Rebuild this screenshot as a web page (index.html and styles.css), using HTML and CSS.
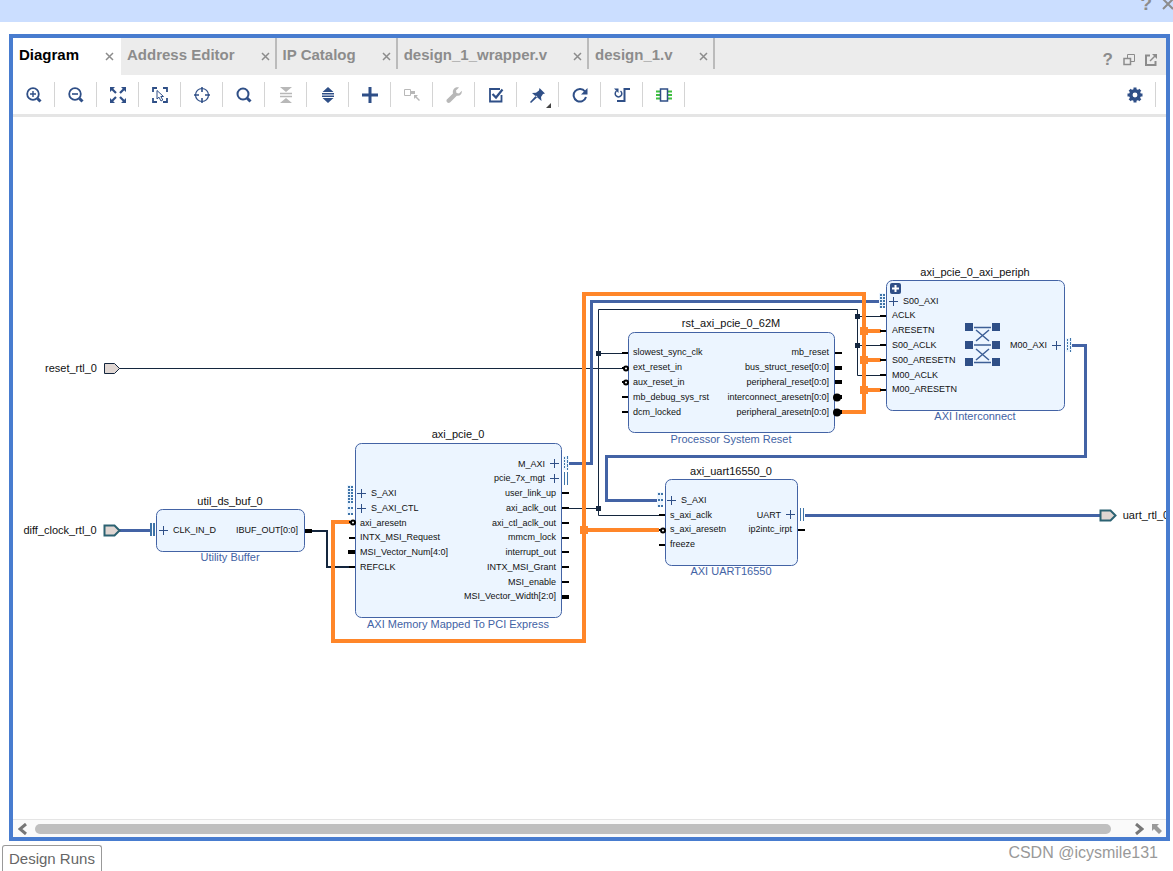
FILE: index.html
```
<!DOCTYPE html>
<html lang="en">
<head>
    <meta charset="UTF-8">
    <title>Diagram</title>
    <link rel="stylesheet" href="styles.css">
</head>
<body>

    <header class="topbar">
        <button class="top-btn">?</button>
        <button class="top-btn" aria-label="Close">
            <svg width="12" height="12"><path d="M1 1l10 10M11 1l-10 10" class="gray-line"/></svg>
        </button>
    </header>

    <main class="panel">
        <!-- tabs -->
        <div class="tabs">
            <div class="tab current">
                <button class="tab-name">Diagram</button>
                <button class="tab-close" aria-label="Close Diagram"><svg width="9" height="9"><path d="M1 1l7 7M8 1l-7 7"/></svg></button>
            </div>
            <div class="tab">
                <button class="tab-name">Address Editor</button>
                <button class="tab-close" aria-label="Close Address Editor"><svg width="9" height="9"><path d="M1 1l7 7M8 1l-7 7"/></svg></button>
            </div>
            <div class="tab">
                <button class="tab-name">IP Catalog</button>
                <button class="tab-close" aria-label="Close IP Catalog"><svg width="9" height="9"><path d="M1 1l7 7M8 1l-7 7"/></svg></button>
            </div>
            <div class="tab">
                <button class="tab-name">design_1_wrapper.v</button>
                <button class="tab-close" aria-label="Close design_1_wrapper.v"><svg width="9" height="9"><path d="M1 1l7 7M8 1l-7 7"/></svg></button>
            </div>
            <div class="tab">
                <button class="tab-name">design_1.v</button>
                <button class="tab-close" aria-label="Close design_1.v"><svg width="9" height="9"><path d="M1 1l7 7M8 1l-7 7"/></svg></button>
            </div>
            <div class="win-btns">
                <button class="win-btn">?</button>
                <button class="win-btn" aria-label="Float">
                    <svg width="12" height="12" fill="none" stroke="#8c8c8c"><path d="M4.500 4V.5h7v7H8" /><path d="M1 4.500h6.500v6H1z" stroke-width="1.500"/></svg>
                </button>
                <button class="win-btn" aria-label="Maximize">
                    <svg width="12" height="12" fill="none" stroke="#8c8c8c"><path d="M5 1.500H1v9.500h9.500V7" stroke-width="2"/><path d="M5 7l5-5" stroke-width="1.500"/><path d="M7 0h5v5z" fill="#8c8c8c" stroke="none"/></svg>
                </button>
            </div>
        </div>

        <!-- toolbar -->
        <div class="toolbar">
            <button class="tool" aria-label="Zoom in">
                <svg width="16" height="16" class="ico"><circle cx="7" cy="7" r="5.800" stroke-width="1.800"/><path d="M4 7h6M7 4v6" stroke-width="1.400"/><path d="M11.500 11.500l3 3" stroke-width="3"/></svg>
            </button>
            <button class="tool" aria-label="Zoom out">
                <svg width="16" height="16" class="ico"><circle cx="7" cy="7" r="5.800" stroke-width="1.800"/><path d="M4 7h6" stroke-width="1.600"/><path d="M11.500 11.500l3 3" stroke-width="3"/></svg>
            </button>
            <button class="tool" aria-label="Zoom fit">
                <svg width="16" height="16" class="ico"><path d="M2 2l4 4M14 2l-4 4M2 14l4-4M14 14l-4-4" stroke-width="2.200"/><path d="M0 0h5L0 5zM16 0v5l-5-5zM0 16v-5l5 5zM16 16h-5l5-5z" class="solid"/></svg>
            </button>
            <button class="tool" aria-label="Zoom to selection">
                <svg width="16" height="16" class="ico"><path d="M1 5V1h4M11 1h4v4M15 11v4h-4M5 15H1v-4" stroke-width="1.800"/><path d="M5 3.500v8.500l2-1.800 2 3.800 1.800-1-2-3.500h2.700z" stroke-width="1"/></svg>
            </button>
            <button class="tool" aria-label="Locate">
                <svg width="16" height="16" class="ico"><circle cx="8" cy="8" r="6.500" stroke-width="1.200"/><path d="M8 0v5M8 11v5M0 8h5M11 8h5" stroke-width="1.600"/></svg>
            </button>
            <button class="tool" aria-label="Search">
                <svg width="16" height="16" class="ico"><circle cx="7" cy="7" r="5.500" stroke-width="2"/><path d="M11 11l3.500 3.500" stroke-width="3"/></svg>
            </button>
            <button class="tool" aria-label="Collapse" disabled>
                <svg width="16" height="16" class="ico off"><path d="M2 0h12L8 5zM2 16h12l-6-5z" class="solid"/><path d="M2 6.500h12M2 9.500h12" stroke-width="1.500"/></svg>
            </button>
            <button class="tool" aria-label="Expand">
                <svg width="16" height="16" class="ico"><path d="M2.500 5L8 0l5.500 5zM2.500 11L8 16l5.500-5z" class="solid"/><path d="M2 6.800h12M2 9.200h12" stroke-width="1.400"/></svg>
            </button>
            <button class="tool" aria-label="Add IP">
                <svg width="16" height="16" class="ico"><path d="M0 8h16M8 0v16" stroke-width="3"/></svg>
            </button>
            <button class="tool" aria-label="Make external" disabled>
                <svg width="16" height="16" class="ico off"><path d="M.5 2.500h6v6h-6z"/><path d="M7 4h4v3H7zM10 8h4l-1.500 1.500L16 13l-1 1-3.500-3.500L10 12z" class="solid"/></svg>
            </button>
            <button class="tool" aria-label="Customize" disabled>
                <svg width="16" height="16" class="ico off"><path d="M13 .5l-3 3 .5 2.500 2.500.5 2.800-2.800c.5 3-1.800 5.800-5 5L4 15.500c-2 1.500-4.500-1-3.200-3L7 6.500C6 2.500 9.500-.5 13 .5z" class="solid"/></svg>
            </button>
            <button class="tool" aria-label="Validate">
                <svg width="16" height="16" class="ico"><path d="M12 2H2v12.500h11.500V8" stroke-width="1.800"/><path d="M4.500 7l3.500 3.500 6.500-8" stroke-width="2.200"/></svg>
            </button>
            <button class="tool tool-menu" aria-label="Pin">
                <svg width="16" height="16" class="ico"><path d="M9.500 1L15 6.500l-2 .5-2 3 .5 4-3.500-3-1.500-1L2 6l4-.2 3-2.300zM6 8.500L0 15l1 1 6.500-6z" class="solid"/></svg>
            </button>
            <button class="tool" aria-label="Refresh">
                <svg width="16" height="16" class="ico"><path d="M13 4.500A6.300 6.300 0 1 0 14 10" stroke-width="2"/><path d="M15.500 1v6.500H9z" class="solid"/></svg>
            </button>
            <button class="tool" aria-label="Regenerate layout">
                <svg width="16" height="16" class="ico"><path d="M2.500 4A3.300 3.300 0 1 0 6.500 4" stroke-width="1.500"/><path d="M0 1.500h4.500V6z" class="solid"/><path d="M3 14h7.500V2H16" stroke-width="2"/></svg>
            </button>
            <button class="tool" aria-label="Interface view">
                <svg width="16" height="16" class="ico"><path d="M0 4.500h4M0 8h4M0 11.500h4M12 4.500h4M12 8h4M12 11.500h4" class="green"/><path d="M4.500 2h7v12h-7z" stroke-width="1.500"/></svg>
            </button>
            <button class="tool tool-last" aria-label="Settings">
                <svg width="16" height="16" class="ico"><circle cx="8" cy="8" r="4.200" stroke-width="3.500"/><path d="M8 .5v3M8 12.500v3M.5 8h3M12.500 8h3M2.700 2.700l2 2M11.300 11.300l2 2M2.700 13.300l2-2M11.300 4.700l2-2" stroke-width="3"/></svg>
            </button>
        </div>

        <!-- block design -->
        <div class="canvas">
            <svg class="design" width="1200" height="702" viewBox="13 117 1200 702">
                <defs>
                    <path id="plus" d="M-4 0.500h9M0.500 -4v9"/>
                    <!-- dense, sparse and half-dashed interface pins -->
                    <g id="dots"><rect x="-3" y="-8" width="6" height="15" class="dot-bg"/><path d="M-1 -7v14M2 -7v14"/></g>
                    <g id="dots-few"><rect x="-3" y="-8" width="6" height="15" class="dot-bg"/><path d="M-1 -7v14M2 -7v14" stroke-dasharray="2 4"/></g>
                    <g id="dots-thin"><rect x="-3" y="-7" width="6" height="14" class="dot-bg"/><path d="M-1.500 -6v12" stroke-width="1"/><path d="M1.500 -7v14" stroke-width="1" stroke-dasharray="3 1"/></g>
                </defs>

                <!-- blocks -->
                <g class="block">
                    <rect x="156.500" y="509.500" width="148" height="42" rx="6"/>
                    <rect x="355.500" y="443.500" width="206" height="174" rx="6"/>
                    <rect x="628.500" y="332.500" width="206" height="100" rx="6"/>
                    <rect x="665.500" y="479.500" width="132" height="86" rx="6"/>
                    <rect x="886.500" y="280.500" width="178" height="130" rx="6"/>
                </g>

                <!-- wires -->
                <g class="wire">
                    <path d="M119 368.500H622"/>
                    <path d="M568 508.500H598.500M622 353.500H598.500M660 515.500H598.500V309.500H857.500V375.500H882M857.500 316.500H882M857.500 345.500H882"/>
                    <path d="M311 531H327V567H350" class="wire-2"/>
                </g>
                <path d="M596 351h5v5h-5zM596 506h5v5h-5zM855 314h5v5h-5zM855 343h5v5h-5z" class="joint"/>
                <g class="bus">
                    <path d="M569 463.500H591.500V301.500H880"/>
                    <path d="M1071 345.500H1085.500V456.500H606.500V500.500H659"/>
                    <path d="M805 515.500H1100M118 530.500H150"/>
                </g>
                <g class="net">
                    <path d="M842 412H864V294H584V641H333V522H350"/>
                    <path d="M864 331H881M864 360H881M864 390H881M584 530H659"/>
                </g>
                <path d="M860 327h8v8h-8zM860 356h8v8h-8zM860 386h8v8h-8zM580 526h8v8h-8z" class="net-joint"/>

                <!-- pins -->
                <g class="pin">
                    <path d="M349 538h6M349 567h6M562 493h7M562 508h7M562 523h7M562 538h7M562 552h7M562 567h7M562 582h7"/>
                    <path d="M622 353h6M622 397h6M622 412h6M835 353h7"/>
                    <path d="M659 515h6M659 545h6M798 530h7"/>
                    <path d="M880 316h6M880 331h6M880 345h6M880 360h6M880 375h6M880 390h6"/>
                    <path d="M305 531h7M348 552h7M562 597h7M835 368h7M835 382h7M835 397h7M835 412h7" class="pin-vec"/>
                    <path d="M349 522h4M622 368h4M622 382h4M659 530h4"/>
                </g>
                <g class="invert">
                    <circle cx="353" cy="522.500" r="2"/>
                    <circle cx="626" cy="368.500" r="2"/>
                    <circle cx="626" cy="382.500" r="2"/>
                    <circle cx="663" cy="530.500" r="2"/>
                </g>
                <circle cx="837" cy="397.500" r="4"/>
                <circle cx="837" cy="412.500" r="4"/>

                <!-- interface pins -->
                <g class="plus">
                    <use href="#plus" x="163" y="530"/>
                    <use href="#plus" x="361" y="493"/>
                    <use href="#plus" x="361" y="508"/>
                    <use href="#plus" x="554" y="463"/>
                    <use href="#plus" x="554" y="478"/>
                    <use href="#plus" x="671" y="500"/>
                    <use href="#plus" x="790" y="514"/>
                    <use href="#plus" x="893" y="301"/>
                    <use href="#plus" x="1056" y="345"/>
                </g>
                <g class="dots">
                    <use href="#dots" x="350" y="493"/>
                    <use href="#dots-few" x="350" y="508"/>
                    <use href="#dots-thin" x="566" y="463"/>
                    <use href="#dots-few" x="660" y="500"/>
                    <use href="#dots" x="882" y="301"/>
                    <use href="#dots-thin" x="1069" y="345"/>
                </g>
                <path d="M564.500 472v13M567.500 472v13M800.500 508v13M803.500 508v13" class="stripes"/>
                <path d="M151 523v13M154 523v13" class="stripes stripes-2"/>

                <!-- external ports -->
                <path d="M104.500 363.500h10l5 5-5 5h-10z" class="port"/>
                <path d="M104.500 525.500h10l5 5-5 5h-10z" class="port port-bus"/>
                <path d="M1100.500 510.500h10l5 5-5 5h-10z" class="port port-bus"/>

                <!-- interconnect symbol -->
                <rect x="890" y="283" width="11" height="11" rx="2" class="navy"/>
                <path d="M892 288.500h7M895.500 285v7" class="expand"/>
                <path d="M965 323h8v8h-8zM992 323h8v8h-8zM965 341h8v8h-8zM992 341h8v8h-8zM965 358h8v8h-8zM992 358h8v8h-8z" class="navy"/>
                <path d="M974 327.500h17M974 345h17M974 362.500h17M976 330l13 11M989 330l-13 11M976 349l13 11M989 349l-13 11" class="cross"/>

                <!-- names -->
                <g class="name">
                    <text x="230" y="505">util_ds_buf_0</text>
                    <text x="458" y="438">axi_pcie_0</text>
                    <text x="731" y="327">rst_axi_pcie_0_62M</text>
                    <text x="731" y="475">axi_uart16550_0</text>
                    <text x="975" y="276">axi_pcie_0_axi_periph</text>
                    <text x="71" y="372">reset_rtl_0</text>
                    <text x="60" y="534">diff_clock_rtl_0</text>
                    <text x="1146" y="519">uart_rtl_0</text>
                </g>
                <g class="name kind">
                    <text x="230" y="561">Utility Buffer</text>
                    <text x="458" y="628">AXI Memory Mapped To PCI Express</text>
                    <text x="731" y="443">Processor System Reset</text>
                    <text x="731" y="575">AXI UART16550</text>
                    <text x="975" y="420">AXI Interconnect</text>
                </g>

                <!-- left labels -->
                <g class="label">
                    <text x="173" y="533">CLK_IN_D</text>
                    <text x="371" y="496">S_AXI</text>
                    <text x="371" y="511">S_AXI_CTL</text>
                    <text x="360" y="526">axi_aresetn</text>
                    <text x="360" y="540">INTX_MSI_Request</text>
                    <text x="360" y="555">MSI_Vector_Num[4:0]</text>
                    <text x="360" y="570">REFCLK</text>
                    <text x="633" y="355">slowest_sync_clk</text>
                    <text x="633" y="370">ext_reset_in</text>
                    <text x="633" y="385">aux_reset_in</text>
                    <text x="633" y="400">mb_debug_sys_rst</text>
                    <text x="633" y="415">dcm_locked</text>
                    <text x="681" y="503">S_AXI</text>
                    <text x="670" y="518">s_axi_aclk</text>
                    <text x="670" y="532">s_axi_aresetn</text>
                    <text x="670" y="547">freeze</text>
                    <text x="903" y="304">S00_AXI</text>
                    <text x="892" y="318">ACLK</text>
                    <text x="892" y="333">ARESETN</text>
                    <text x="892" y="348">S00_ACLK</text>
                    <text x="892" y="363">S00_ARESETN</text>
                    <text x="892" y="378">M00_ACLK</text>
                    <text x="892" y="392">M00_ARESETN</text>
                </g>

                <!-- right labels -->
                <g class="label label-end">
                    <text x="298" y="533">IBUF_OUT[0:0]</text>
                    <text x="545" y="467">M_AXI</text>
                    <text x="545" y="481">pcie_7x_mgt</text>
                    <text x="556" y="496">user_link_up</text>
                    <text x="556" y="511">axi_aclk_out</text>
                    <text x="556" y="526">axi_ctl_aclk_out</text>
                    <text x="556" y="540">mmcm_lock</text>
                    <text x="556" y="555">interrupt_out</text>
                    <text x="556" y="570">INTX_MSI_Grant</text>
                    <text x="556" y="585">MSI_enable</text>
                    <text x="556" y="599">MSI_Vector_Width[2:0]</text>
                    <text x="829" y="355">mb_reset</text>
                    <text x="829" y="370">bus_struct_reset[0:0]</text>
                    <text x="829" y="385">peripheral_reset[0:0]</text>
                    <text x="829" y="400">interconnect_aresetn[0:0]</text>
                    <text x="829" y="415">peripheral_aresetn[0:0]</text>
                    <text x="781" y="518">UART</text>
                    <text x="792" y="532">ip2intc_irpt</text>
                    <text x="1047" y="348">M00_AXI</text>
                </g>
            </svg>
        </div>

        <!-- horizontal scrollbar -->
        <div class="scroll">
            <button class="scroll-btn" aria-label="Scroll left"><svg width="9" height="12"><path d="M8 1L2 6l6 5"/></svg></button>
            <div class="scroll-track"><div class="scroll-thumb"></div></div>
            <button class="scroll-btn" aria-label="Scroll right"><svg width="9" height="12"><path d="M1 1l6 5-6 5"/></svg></button>
            <button class="scroll-corner" aria-label="Overview"><svg width="10" height="10"><path d="M0 0h7L5 2l5 5-3 3-5-5-2 2z" fill="#999"/></svg></button>
        </div>
    </main>

    <footer class="bottom">
        <button class="bottom-tab">Design Runs</button>
        <span class="mark">CSDN @icysmile131</span>
    </footer>

</body>
</html>
```
FILE: styles.css
```
* {
    padding: 0;
    margin: 0;
    box-sizing: border-box;
}
body {
    height: 100vh;
    display: flex;
    flex-direction: column;
    overflow: hidden;
    background-color: #fff;
    font-family: "Liberation Sans", Arial, sans-serif;
}
button {
    border: none;
    background: none;
    font-family: inherit;
    color: inherit;
}
svg {
    display: block;
}

/* top strip */
.topbar {
    height: 22px;
    flex: none;
    display: flex;
    justify-content: flex-end;
    align-items: flex-start;
    gap: 10px;
    margin-right: -1px;
    background-color: #cbdeff;
    overflow: hidden;
}
.top-btn {
    height: 8px;
    line-height: 8px;
    font-size: 19px;
    font-weight: bold;
    color: #8c8c8c;
}
.top-btn svg {
    margin-top: -2px;
}
.gray-line {
    stroke: #8c8c8c;
    stroke-width: 2;
}

/* panel */
.panel {
    flex: 1;
    min-height: 0;
    display: flex;
    flex-direction: column;
    margin: 12px 3px 0 9px;
    border: 4px solid #487ccf;
}
.tabs {
    height: 37px;
    flex: none;
    display: flex;
    align-items: flex-start;
    background-color: #ececec;
}
.tab {
    height: 31px;
    display: flex;
    align-items: center;
    gap: 26px;
    padding: 2px 5px 0 6px;
    border-right: 2px solid #bbb;
    color: #8c8c8c;
}
.tab-name {
    font-size: 15px;
    font-weight: bold;
}
.tab-close {
    padding-top: 4px;
}
.tab-close path {
    stroke: #8c8c8c;
    stroke-width: 1.5;
}
.current {
    height: 37px;
    padding-bottom: 6px;
    border-color: #fff;
    background-color: #fff;
    color: #000;
}
.win-btns {
    display: flex;
    align-items: center;
    gap: 10px;
    height: 37px;
    margin-left: auto;
    padding: 6px 9px 0 0;
}
.win-btn {
    font-size: 17px;
    font-weight: bold;
    color: #8c8c8c;
}

/* toolbar */
.toolbar {
    height: 42px;
    flex: none;
    display: flex;
    align-items: center;
    border-bottom: 3px solid #e5e5e5;
}
.tool {
    width: 42px;
    height: 25px;
    display: flex;
    align-items: center;
    justify-content: center;
    border-right: 1px solid #d4d4d4;
}
.tool-last {
    margin-left: auto;
    margin-right: 10px;
}
.tool-menu {
    position: relative;
}
.tool-menu::after {
    content: "";
    position: absolute;
    right: 7px;
    bottom: -1px;
    border-left: 5px solid transparent;
    border-bottom: 5px solid #444;
}
.ico {
    fill: none;
    stroke: #2f4f87;
}
.ico .solid {
    fill: #2f4f87;
    stroke: none;
}
.ico.off {
    stroke: #b8b8b8;
}
.ico.off .solid {
    fill: #b8b8b8;
}
.ico .green {
    stroke: #3fbf3f;
    stroke-width: 2;
}

/* design */
.canvas {
    flex: 1;
    min-height: 0;
    overflow: hidden;
}
.block rect {
    fill: #ecf5ff;
    stroke: #4363a5;
}
.wire {
    fill: none;
    stroke: #14263e;
}
.wire-2 {
    stroke-width: 2;
}
.joint {
    fill: #14263e;
}
.bus {
    fill: none;
    stroke: #4363a5;
    stroke-width: 3;
}
.net {
    fill: none;
    stroke: #ff8629;
    stroke-width: 4;
}
.net-joint {
    fill: #ff8629;
}
.pin {
    stroke: #000;
    stroke-width: 2;
}
.pin-vec {
    stroke-width: 4;
}
.invert {
    fill: #fff;
    stroke: #000;
    stroke-width: 2;
}
.plus {
    stroke: #2f4f87;
}
.dots {
    stroke: #3f74a8;
    stroke-width: 2;
    stroke-dasharray: 2 1;
}
.dot-bg {
    fill: #ecf5ff;
    stroke: none;
}
.stripes {
    stroke: #3f74a8;
}
.stripes-2 {
    stroke-width: 2;
}
.port {
    fill: #e0d6d2;
    stroke: #14263e;
}
.port-bus {
    stroke: #2c6272;
    stroke-width: 2;
}
.navy {
    fill: #2f4f87;
}
.expand {
    stroke: #fff;
    stroke-width: 2;
}
.cross {
    stroke: #3d5f96;
    stroke-width: 1.5;
}
.name {
    font-size: 11px;
    text-anchor: middle;
    fill: #111;
}
.kind {
    fill: #4363a5;
}
.label {
    font-size: 9px;
    fill: #111;
}
.label-end {
    text-anchor: end;
}

/* scrollbar */
.scroll {
    height: 18px;
    flex: none;
    display: flex;
    align-items: center;
    gap: 8px;
    padding: 0 4px 0 5px;
    border-top: 1px solid #e5e5e5;
    background-color: #fafafa;
}
.scroll-btn path {
    fill: none;
    stroke: #777;
    stroke-width: 3;
}
.scroll-track {
    flex: 1;
    padding-right: 16px;
}
.scroll-thumb {
    height: 10px;
    border-radius: 5px;
    background-color: #bfbfbf;
}

/* bottom */
.bottom {
    height: 30px;
    flex: none;
    display: flex;
    justify-content: space-between;
    padding: 4px 15px 0 2px;
}
.bottom-tab {
    padding: 0 6px;
    border: 1px solid #999;
    border-bottom: none;
    border-radius: 3px 3px 0 0;
    font-size: 15px;
    color: #666;
}
.mark {
    font-size: 16px;
    line-height: 16px;
    color: #999;
}
```
